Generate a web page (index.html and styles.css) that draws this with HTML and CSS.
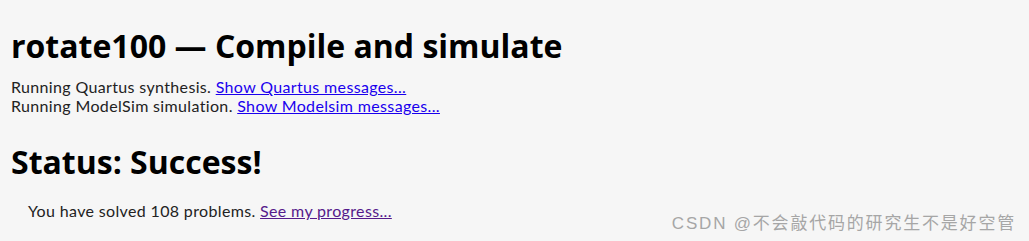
FILE: index.html
```html
<!DOCTYPE html>
<html lang="en">
<head>
    <meta charset="UTF-8">
    <title>rotate100 — Compile and simulate</title>
    <link rel="stylesheet" href="styles.css">
</head>
<body>
<h1>rotate100 — Compile and simulate</h1>
<div class="log">
    Running Quartus synthesis. <a href="#">Show Quartus messages...</a><br>
    Running ModelSim simulation. <a href="#">Show Modelsim messages...</a>
</div>
<h2>Status: Success!</h2>
<p class="progress">You have solved 108 problems. <a href="#" class="visited">See my progress...</a></p>
<div class="watermark">CSDN @不会敲代码的研究生不是好空管</div>
</body>
</html>
```

FILE: styles.css
```css
body {
    margin: 0;
    padding: 0 11px;
    background-color: #f6f6f6;
    font-family: Lato, "Noto Sans", sans-serif;
    font-size: 16px;
    letter-spacing: 0.35px;
    color: #222;
    position: relative;
    height: 241px;
}
h1, h2 {
    font-family: "Open Sans", sans-serif;
    font-weight: bold;
    letter-spacing: 0;
    color: #000;
    margin: 0;
}
h1 {
    font-size: 32px;
    padding-top: 24px;
    line-height: 44px;
}
.log {
    margin-top: 9px;
    line-height: 19px;
}
h2 {
    font-size: 32px;
    margin-top: 25px;
    line-height: 44px;
}
a {
    color: #1a00ee;
}
a.visited {
    color: #551a8b;
}
.progress {
    margin: 17px 0 0 17px;
}
.watermark {
    position: absolute;
    right: 13px;
    top: 209px;
    font-family: "Liberation Sans", "Noto Sans CJK SC", sans-serif;
    font-size: 17px;
    letter-spacing: 1.8px;
    color: #a6a6a6;
}
```
